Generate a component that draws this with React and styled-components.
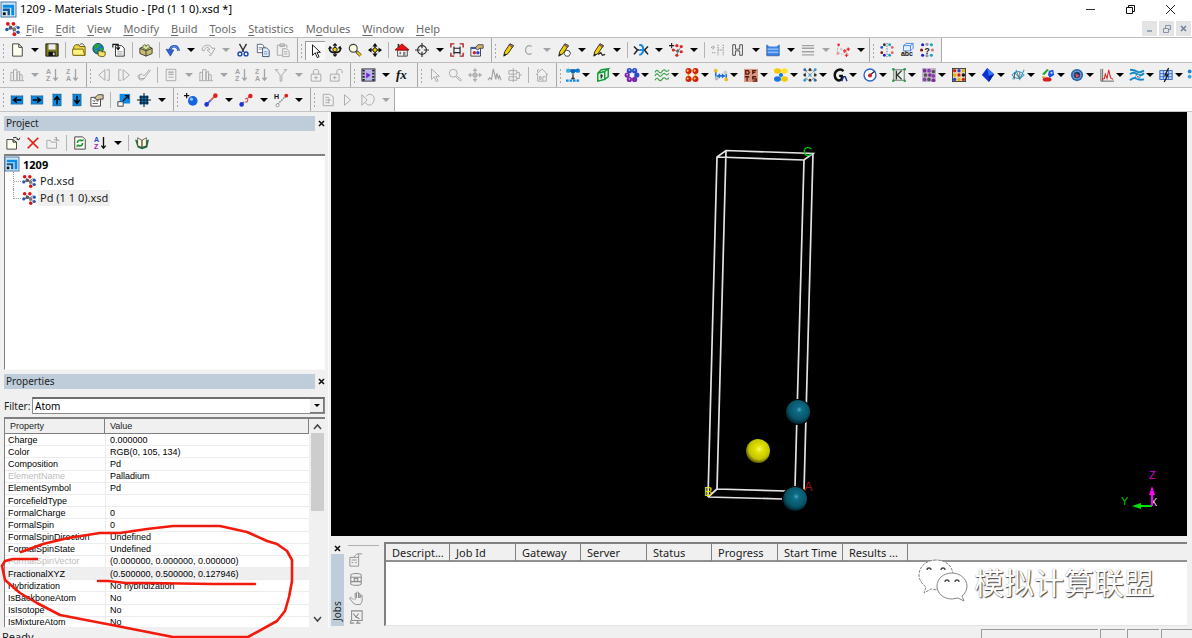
import React from 'react'
import styled, { createGlobalStyle, css } from 'styled-components'

const GlobalStyle = createGlobalStyle`
* {
  box-sizing: border-box;
}
body {
  margin: 0;
  background: #fff;
  font-family: "Noto Sans", "Open Sans", sans-serif;
  font-size: 11px;
  color: #1c1c1c;
}
button {
  font: inherit;
  color: inherit;
  border: 0;
  padding: 0;
  background: transparent;
}
`

const Window = styled.div`
position: relative;
height: 100vh;
display: flex;
flex-direction: column;
overflow: hidden;
background: #fff;
`

/* title and menu */

const TitleBar = styled.header`
display: flex;
align-items: center;
height: 20px;
padding: 0 2px 2px 1px;
flex: none;
`
const Title = styled.h1`
flex: 1;
margin: 0 0 0 4px;
font-size: 11px;
font-weight: 400;
line-height: 18px;
color: #000;
`
const WindowButton = styled.button`
width: 40px;
height: 18px;
display: flex;
align-items: center;
justify-content: center;
&:hover {
  background: #e5e5e5;
}
`
const MenuBar = styled.nav`
display: flex;
align-items: center;
height: 17px;
padding-left: 5px;
flex: none;
`
const MenuList = styled.div`
display: flex;
flex: 1;
gap: 12px;
margin-left: 6px;
`
const MenuItem = styled.button`
line-height: 16px;
color: #6a6a6a;
u {
  text-underline-offset: 2px;
}
`
const MdiButtons = styled.div`
display: flex;
gap: 2px;
padding-right: 1px;
`
const MdiButton = styled.button`
width: 15px;
height: 15px;
display: flex;
align-items: center;
justify-content: center;
background: #e4e4e4;
`

/* tool bars */

const ToolRow = styled.div`
display: flex;
height: ${props => props.$last ? '24px' : '25px'};
flex: none;
border-top: 1px solid #bdbdbd;
overflow: hidden;
`
const Group = styled.div`
display: flex;
align-items: center;
flex: ${props => props.$grow ? '1 1 0' : 'none'};
min-width: 0;
padding-right: ${props => props.$grow ? '0' : props.$tight ? '1px' : '4px'};
background: #f0f0f0;
border-right: ${props => props.$grow ? '0' : '1px solid #a9a9a9'};
`
const Grip = styled.span`
flex: none;
width: 3px;
height: 15px;
margin: 0 2px;
background: radial-gradient(circle, #a8a8a8 1px, transparent 1px) 0 0 / 3px 4px;
`
const ToolButton = styled.button`
width: 20px;
height: 19px;
flex: none;
display: flex;
align-items: center;
justify-content: center;
${props => props.$pressed && css`
background: #f9f9f9;
border-top: 1px solid #9a9a9a;
border-left: 1px solid #9a9a9a;
`}
`
const DropButton = styled.button`
width: 15px;
height: 19px;
flex: none;
display: flex;
align-items: center;
justify-content: center;
&::before {
  content: '';
  border: 4px solid transparent;
  border-top-color: ${props => props.$off ? '#a3a3a3' : '#000'};
  border-bottom: 0;
}
`
const Separator = styled.span`
flex: none;
width: 1px;
height: 16px;
margin: 0 3px;
background: #b4b4b4;
`
const ModuleCell = styled.div`
display: flex;
flex: 1 1 0;
min-width: 0;
${ToolButton} {
  width: 18px;
}
${DropButton} {
  width: 8px;
}
`
const LastModule = styled.div`
width: 5px;
overflow: hidden;
flex: none;
`

/* work area */

const Main = styled.main`
display: flex;
flex: 1;
min-height: 0;
background: #f0f0f0;
border-top: 1px solid #c4c4c4;
`
const Dock = styled.aside`
width: 329px;
flex: none;
display: flex;
flex-direction: column;
padding: 4px 3px 1px 4px;
border-right: 1px solid #fbfbfb;
`
const DockHeader = styled.div`
display: flex;
align-items: center;
height: 15px;
flex: none;
margin-right: -2px;
`
const DockTitle = styled.h2`
flex: 1;
margin: 0;
padding-left: 2px;
background: #bfcddb;
font-size: 10px;
line-height: 15px;
font-weight: 400;
color: #222;
`
const CloseButton = styled.button`
width: 12px;
height: 12px;
flex: none;
display: flex;
align-items: center;
justify-content: center;
`
const DockTools = styled.div`
display: flex;
align-items: center;
height: 23px;
flex: none;
margin-left: -1px;
`
const Tree = styled.ul`
height: 216px;
flex: none;
margin: 0;
padding: 0;
list-style: none;
background: #fff;
border-top: 2px solid #808080;
border-left: 1px solid #808080;
border-bottom: 1px solid #fafafa;
`
const TreeRoot = styled.li`
display: flex;
align-items: center;
gap: 4px;
height: 16px;
font-weight: 700;
color: #000;
`
const TreeItem = styled.li`
display: flex;
align-items: center;
height: 17px;
padding-left: 8px;
`
const TreeBranch = styled.span`
width: 9px;
height: 17px;
border-left: 1px dotted #999;
background: linear-gradient(90deg, #aaa 50%, transparent 50%) 0 9px / 2px 1px repeat-x;
${props => props.$last && css`
height: 10px;
align-self: flex-start;
`}
`
const TreeLabel = styled.span`
margin-left: 2px;
padding: 0 2px;
line-height: 16px;
background: ${props => props.$selected ? '#efefef' : 'transparent'};
`
const PropertiesHeader = styled(DockHeader)`
margin-top: 4px;
`
const FilterRow = styled.div`
display: flex;
align-items: center;
justify-content: space-between;
margin: 8px 0 3px;
font-size: 10px;
`
const SelectBox = styled.div`
position: relative;
display: flex;
width: 293px;
`
const Select = styled.select`
appearance: none;
width: 100%;
height: 17px;
padding: 0 18px 0 2px;
font-family: inherit;
font-size: 10px;
line-height: 14px;
color: #000;
background: #fff;
border: 1px solid #8a8a8a;
border-top: 2px solid #6e6e6e;
border-radius: 0;
`
const SelectArrow = styled.span`
position: absolute;
right: 1px;
top: 2px;
width: 14px;
height: 14px;
display: flex;
align-items: center;
justify-content: center;
pointer-events: none;
background: #f0f0f0;
border-right: 1px solid #777;
border-bottom: 1px solid #777;
&::before {
  content: '';
  border: 3px solid transparent;
  border-top-color: #000;
  border-bottom: 0;
}
`
const PropertyBox = styled.div`
display: flex;
flex: 1;
min-height: 0;
overflow: hidden;
background: #fff;
border-top: 2px solid #808080;
border-left: 1px solid #808080;
`
const PropertyTable = styled.table`
flex: 1;
height: 210px;
table-layout: fixed;
border-collapse: separate;
border-spacing: 0;
font-family: "Liberation Sans", Arial, sans-serif;
font-size: 9px;
line-height: 10px;
th {
  height: 15px;
  padding: 0 5px;
  text-align: left;
  font-weight: 400;
  background: #f0f0f0;
  border-right: 1px solid #808080;
  border-bottom: 1px solid #808080;
}
th:first-child {
  width: 100px;
}
td {
  padding: 0 3px;
  white-space: nowrap;
  border-bottom: 1px solid #ececec;
}
td + td {
  padding-left: 4px;
  border-left: 1px solid #ececec;
}
`
const PropertyRow = styled.tr`
background: ${props => props.$selected ? '#efefef' : '#fff'};
color: #000;
td:first-child {
  color: ${props => props.$readOnly ? '#bdbdbd' : '#000'};
}
`
const ScrollBar = styled.div`
width: 16px;
flex: none;
display: flex;
flex-direction: column;
align-items: center;
justify-content: space-between;
padding: 2px 0;
background: #f0f0f0;
`
const ScrollTrack = styled.div`
flex: 1;
width: 13px;
`
const ScrollThumb = styled.div`
height: 78px;
background: #cdcdcd;
`
const Work = styled.section`
flex: 1;
min-width: 0;
display: flex;
flex-direction: column;
padding: 0 5px 2px 2px;
`
const Viewport = styled.div`
flex: 1;
min-height: 0;
background: #000;
svg {
  display: block;
  width: 100%;
  height: 100%;
}
`
const Jobs = styled.div`
height: 90px;
flex: none;
display: flex;
padding-top: 6px;
`
const JobsSide = styled.div`
width: 13px;
display: flex;
flex-direction: column;
align-items: center;
`
const JobsTab = styled.h2`
flex: 1;
width: 13px;
margin: 0;
padding-top: 5px;
writing-mode: vertical-rl;
transform: rotate(180deg);
background: #bfcddb;
font-size: 10px;
line-height: 13px;
font-weight: 400;
`
const JobsTools = styled.div`
display: flex;
flex-direction: column;
width: 31px;
margin: 3px 5px 0 4px;
padding-top: 4px;
border-top: 1px solid #b0b0b0;
${ToolButton} {
  width: 16px;
}
`
const JobsBox = styled.div`
position: relative;
flex: 1;
min-width: 0;
background: #fff;
border-top: 2px solid #808080;
border-left: 2px solid #808080;
border-bottom: 1px solid #e3e3e3;
`
const JobsTable = styled.table`
width: 100%;
table-layout: fixed;
border-collapse: separate;
border-spacing: 0;
th {
  height: 18px;
  padding: 0 6px;
  text-align: left;
  font-weight: 400;
  line-height: 15px;
  white-space: nowrap;
  overflow: hidden;
  background: #f0f0f0;
  border-right: 1px solid #808080;
  border-bottom: 2px solid #909090;
}
th:last-child {
  border-right: 0;
}
`
const Watermark = styled.div`
position: absolute;
right: 33px;
top: 15px;
display: flex;
align-items: center;
gap: 6px;
font-family: "Noto Sans CJK SC", sans-serif;
font-size: 30px;
line-height: 44px;
color: #fff;
text-shadow: 1px 1px 1px #444, 0 0 1px #888;
`
const StatusBar = styled.footer`
height: 10px;
flex: none;
display: flex;
justify-content: space-between;
gap: 2px;
padding: 1px 0 0 2px;
overflow: hidden;
background: #f0f0f0;
line-height: 15px;
`
const StatusText = styled.span`
flex: 1;
`
const StatusPanel = styled.span`
width: ${props => props.$width}px;
border-top: 1px solid #9b9b9b;
border-left: 1px solid #9b9b9b;
`
const Markup = styled.svg`
position: absolute;
left: 0;
bottom: 0;
pointer-events: none;
`

/* icons, all drawn on a 16 unit grid */

const grey = '#a3a3a3'

const molecule = (
  <>
    <path d="M3 3l5 5 5 4M8 8l5-3M8 8l-6 1M8 8l2 6M2 9l6-1" stroke="#888" fill="none" />
    <circle cx="3" cy="3" r="2" fill="#d11" /><circle cx="9" cy="3" r="2" fill="#d11" />
    <circle cx="6" cy="7" r="2" fill="#555" /><circle cx="10" cy="9" r="2" fill="#777" />
    <circle cx="2" cy="9" r="1.8" fill="#1d54b5" /><circle cx="14" cy="7" r="1.8" fill="#1d54b5" />
    <circle cx="14" cy="12" r="1.8" fill="#1d54b5" /><circle cx="10" cy="14" r="2" fill="#d11" />
  </>
)

const sortLetters = (a, b, colorA, colorB, line) => (
  <>
    <text x="1" y="7" fontSize="8" fontWeight="700" fill={colorA} fontFamily="Liberation Sans">{a}</text>
    <text x="1" y="15" fontSize="8" fontWeight="700" fill={colorB} fontFamily="Liberation Sans">{b}</text>
    <path d="M12 1v13M9.500 11l2.500 3 2.500-3" stroke={line} strokeWidth="1.500" fill="none" />
  </>
)

const pencil = (
  <>
    <path d="M2 15l1-5 6-9 4 2-6 9z" fill="#f0d000" stroke="#222" />
    <path d="M8 2l1-1 4 2-1 2z" fill="#d77a8a" stroke="#222" strokeWidth=".7" />
    <path d="M2 15l1-3 2 1z" fill="#111" />
  </>
)

const paneArrow = d => (
  <>
    <rect x="1" y="3" width="14" height="10" fill="#0a8be8" />
    <path d="M1 3.500h14M1 12.500h14M1.500 3v10M14.500 3v10" stroke="#555" strokeDasharray="1 1" />
    <path d={d} stroke="#000" strokeWidth="1.600" fill="none" />
  </>
)

const paneArrowTall = d => (
  <>
    <rect x="3" y="1" width="10" height="14" fill="#0a8be8" />
    <path d="M3.500 1v14M12.500 1v14M3 1.500h10M3 14.500h10" stroke="#555" strokeDasharray="1 1" />
    <path d={d} stroke="#000" strokeWidth="1.600" fill="none" />
  </>
)

const dots = (list, r = 1.8) => list.map(([x, y, fill]) => (
  <circle key={x + '-' + y} cx={x} cy={y} r={r} fill={fill} />
))

const bars = <path d="M1 14V5h3v9M4 14V2h4v12M8 14V5l3-1v10M11 14V7l3 1v6M0 14.500h16" stroke={grey} fill="none" />

const icons = {
  app: (
    <>
      <rect width="16" height="16" fill="#cfe6f7" stroke="#3a6ea5" />
      <path d="M2 3h12v11h-3V6H2z" fill="#0a8be8" />
      <path d="M2 7h7.500v7H7V9.500H2z" fill="#135a9a" />
      <rect x="2" y="11" width="3" height="3" fill="#111" />
    </>
  ),
  molecule,
  newFile: <path d="M3 1h7l4 4v10H3zM10 1v4h4" fill="#fffff0" stroke="#333" />,
  save: (
    <>
      <path d="M1 1h14v14H1z" fill="#7a7a20" stroke="#111" />
      <rect x="4" y="1.500" width="8" height="6" fill="#eee" /><rect x="4" y="10" width="8" height="5" fill="#111" />
      <rect x="9" y="11" width="2" height="3" fill="#ddd" />
    </>
  ),
  open: (
    <>
      <path d="M2 14V4l2-2h4l1 2h6v10z" fill="#e8d44d" stroke="#5c5000" />
      <path d="M1 14l-.500-7h12l2 7z" fill="#fff27a" stroke="#6d6000" />
      <path d="M9 2c2-2 4-1 5 1" stroke="#333" fill="none" />
    </>
  ),
  globe: (
    <>
      <circle cx="7" cy="6.500" r="6" fill="#1c73d8" stroke="#0a3a66" />
      <path d="M2 4c3-4 6-3 8-2L8 5 5 6l1 4-2 1zM9 6l4-1-1 4-3 1z" fill="#23a33a" />
      <path d="M7 14V9h3l1 1h4v4q-1 2-4 1.500T7 14z" fill="#f3e36a" stroke="#5c5000" />
    </>
  ),
  importFile: (
    <>
      <path d="M4 3h7l3 3v9H4z" fill="#fff" stroke="#222" />
      <path d="M1 5V1.500h6V7M5 5l2 2.500L9 5" stroke="#111" strokeWidth="1.300" fill="none" />
      <path d="M6 10h6M6 12.500h6" stroke="#888" />
    </>
  ),
  box: (
    <>
      <path d="M1 6l7-3 7 3v6l-7 3-7-3z" fill="#c9bd72" stroke="#333" />
      <path d="M1 6l7 3 7-3M8 9v6" stroke="#333" fill="none" />
      <path d="M4 5c1-4 4-4 4-1 1-3 5-2 4 1L8 8z" fill="#dfe3b0" stroke="#4a6a2a" />
    </>
  ),
  undo: (
    <>
      <path d="M4.500 9C5 3 13 1 14.500 9" stroke="#1f4fc0" strokeWidth="3" fill="none" />
      <path d="M4.500 9C5 3 13 1 14.500 9" stroke="#7aa4f5" strokeWidth="1" fill="none" />
      <path d="M0 7l9 1-4 7z" fill="#2f62d0" stroke="#1a3a90" strokeWidth=".6" />
    </>
  ),
  redo: <path d="M1 8C2 1 11 1 12.500 6L16 6l-4 7-5-5 3-.500C9 4 5 4 3.500 9zM9 14h3" fill="none" stroke={grey} />,
  cut: (
    <>
      <path d="M4 1l5 9M12 1L7 10" stroke="#333" strokeWidth="1.600" />
      <circle cx="4.500" cy="12.500" r="2.200" fill="none" stroke="#1946b0" strokeWidth="1.600" />
      <circle cx="11.500" cy="12.500" r="2.200" fill="none" stroke="#1946b0" strokeWidth="1.600" />
    </>
  ),
  copy: (
    <>
      <path d="M1.500 1.500H7l2 2V11H1.500z" fill="#fff" stroke="#4a5568" /><path d="M3 5h4M3 7h4" stroke="#7b8aa0" />
      <path d="M7.500 5.500H12l3 3v7H7.500z" fill="#e8f0ff" stroke="#344768" /><path d="M9 10h4M9 12.500h4" stroke="#6c88b8" />
    </>
  ),
  paste: (
    <>
      <path d="M7 14H1.500V2.500h11V6M4.500 1h5v3h-5z" fill="none" stroke={grey} />
      <path d="M7.500 6.500H12l3 3v6H7.500zM9 10h4M9 12.500h4" fill="none" stroke={grey} />
    </>
  ),
  cursor: <path d="M4 1v12l3-3 2.500 5.500 2-1L9 9.500h4z" fill="#fff" stroke="#000" />,
  rotate: (
    <>
      <path d="M8 1v14M6 3l2-2 2 2M6 13l2 2 2-2" stroke="#111" strokeWidth="1.400" fill="none" />
      <path d="M2 6c-1 4 3 5 6 5s7-1 6-5" stroke="#111" strokeWidth="1.800" fill="none" />
      <path d="M0 7l2-4 3 3zM16 7l-2-4-3 3z" fill="#111" /><circle cx="8" cy="7.500" r="2.500" fill="#f0d000" stroke="#111" />
    </>
  ),
  zoom: (
    <>
      <circle cx="6" cy="6" r="4.500" fill="#fdfde0" stroke="#444" strokeWidth="1.300" />
      <path d="M9.500 9.500l5 5" stroke="#444" strokeWidth="3.500" /><path d="M10.500 10.500l4 4" stroke="#f0d000" strokeWidth="2" />
    </>
  ),
  move: (
    <>
      <path d="M8 1v14M1 8h14" stroke="#111" strokeWidth="1.400" />
      <path d="M5 4l3-4 3 4zM5 12l3 4 3-4zM4 5L0 8l4 3zM12 5l4 3-4 3z" fill="#111" />
      <circle cx="8" cy="8" r="2.500" fill="#f0d000" stroke="#111" />
    </>
  ),
  home: (
    <>
      <path d="M3 8h11v7H3z" fill="#fff" stroke="#333" /><path d="M0 8l8-7 8 7z" fill="#ee1111" stroke="#900" />
      <rect x="9" y="10" width="3" height="5" fill="#888" /><rect x="5" y="10" width="2" height="3" fill="#777" />
      <path d="M3 1h2v4H3z" fill="#333" />
    </>
  ),
  target: (
    <>
      <circle cx="8" cy="8" r="5" fill="none" stroke="#333" strokeWidth="1.400" />
      <path d="M8 0v6M8 10v6M0 8h6M10 8h6" stroke="#333" strokeWidth="1.400" />
    </>
  ),
  fit: (
    <>
      <path d="M1 5V1h4M11 1h4v4M15 11v4h-4M5 15H1v-4" stroke="#b02020" strokeWidth="1.600" fill="none" />
      <path d="M4.500 4v9M11.500 4v9M4 6h8M4 11h8" stroke="#222" strokeWidth="1.300" />
    </>
  ),
  display: (
    <>
      <path d="M1 5h11v10H1z" fill="#fff" stroke="#333" /><path d="M1 5h11v2H1z" fill="#2458c0" />
      <circle cx="5" cy="11" r="2" fill="#d22" /><circle cx="9" cy="11" r="2" fill="#24d" />
      <path d="M6 6l3-4h6v4h-4L9 8z" fill="#d8b66a" stroke="#444" />
    </>
  ),
  pencil,
  partialC: <path d="M11 4C6 1 4 6 4 8s2 7 7 4" fill="none" stroke={grey} strokeWidth="1.300" />,
  pencilRing: <>{pencil}<path d="M10 8l4 1 1.500 3-2 3h-3.500l-2-3z" fill="#fff" stroke="#333" /></>,
  pencilChain: <>{pencil}<path d="M7 13l3-2 2 3 3-1" fill="none" stroke="#222" strokeWidth="1.400" /></>,
  adjust: (
    <>
      <path d="M0 4l4 4-4 5M4 8h2M16 4l-4 4 4 5" stroke="#222" strokeWidth="1.800" fill="none" />
      <path d="M6 2.500c6-2 6 11 0 11M9 8H6" stroke="#1787e0" strokeWidth="2.400" fill="none" />
    </>
  ),
  addAtoms: (
    <>
      <path d="M0 3h6M3 0v6" stroke="#222" strokeWidth="1.300" />
      <path d="M6 8l4 2 4-6M10 10l-1 4" stroke="#777" fill="none" />
      {dots([[9, 3, '#d22'], [14, 4, '#d22'], [5, 8, '#d22'], [10, 9, '#666'], [14, 10, '#d22'], [9, 14, '#d22']], 1.8)}
    </>
  ),
  dottedH: <path d="M0 5h5M2.500 3v5M8 2v12M14 2v12M8 8h6M1 11h4" stroke={grey} strokeDasharray="1.500 1.200" strokeWidth="1.500" fill="none" />,
  letterH: <path d="M2 2h3v5h5V2h3v12h-3V9H5v5H2z" fill="#fff" stroke="#333" />,
  layers: (
    <>
      <path d="M1 2l3 2h8l3-2v12H1z" fill="#3a86e8" /><path d="M1 7h14M1 10.500h14" stroke="#cfe2ff" />
      <path d="M1 2v12.500h14V2" stroke="#1d4da0" fill="none" />
    </>
  ),
  lines: <path d="M1 3h14M1 6h14M1 10h14M1 13.500h14" stroke={grey} strokeWidth="1.500" />,
  hbond: (
    <>
      <path d="M3 3L1 9l5 4 5-3 3 3" stroke={grey} strokeDasharray="2 1" fill="none" />
      {dots([[3, 2, '#e22'], [2, 12, '#e88'], [6, 7, '#ccc']], 1.5)}
      <path d="M8 9h4M10 7v4M10 14h4M12 12v4M12 7h4M14 5v4" stroke="#e22" strokeWidth="1.300" />
    </>
  ),
  cluster: (
    <>
      {dots([[5, 2, '#333'], [11, 2, '#17a2c8'], [2, 5, '#1d54d5'], [14, 5, '#d66'], [2, 11, '#811'], [14, 11, '#d66'], [5, 14, '#1d1de0'], [11, 14, '#17a2c8']], 1.6)}
      <path d="M8 0v16" stroke="#555" strokeDasharray="1.500 1.500" />
    </>
  ),
  abc: (
    <>
      <path d="M4 3h8v6H4zM4 3l3-2.500h8V6l-3 3M12 3l3-2.500" fill="#e6f0ff" stroke="#3a80e0" />
      <text x="1" y="15" fontSize="8" fontWeight="700" fontFamily="Liberation Sans" fill="#111">abc</text>
    </>
  ),
  clusterHelp: (
    <>
      {dots([[3, 2, '#1d1de0'], [8, 1.5, '#999'], [13, 2, '#17a2c8'], [1.8, 8, '#811'], [14.2, 8, '#d77'], [3, 14, '#1d1de0'], [8, 14.5, '#999'], [13, 14, '#17a2c8']])}
      <text x="5" y="12" fontSize="10" fontWeight="700" fontFamily="Liberation Sans" fill="#222">?</text>
    </>
  ),
  bars,
  sortAZ: sortLetters('A', 'Z', grey, grey, grey),
  sortZA: sortLetters('Z', 'A', grey, grey, grey),
  sortColor: sortLetters('A', 'Z', '#2540e0', '#a0209a', '#111'),
  prev: <path d="M9 2L2 8l7 6zM11 2h3v12h-3" fill="none" stroke={grey} />,
  next: <path d="M7 2l7 6-7 6zM5 2H2v12h3" fill="none" stroke={grey} />,
  edit: <path d="M1 9c2-3 5-2 7 0l6-7 1 1-6 8c-2 4-7 4-8-2zM4 12h5M3 8v5" fill="none" stroke={grey} />,
  sheet: <path d="M2.500 1.500h11v13h-11zM5 4.500h6M5 7.500h6M5 10.500h6M5 5.500h6" fill="none" stroke={grey} />,
  funnel: <path d="M2 2l5 6v7h2V8l5-6M1 2h4M11 2h4" fill="none" stroke={grey} />,
  lock: <path d="M2.500 7h11v8h-11zM5 7V3c1-2 5-2 6 0v4M8 9v4M6 11h4" fill="none" stroke={grey} />,
  unlock: <path d="M1.500 7h10v8h-10zM9 7V3c1-2 5-2 6 0v3M6.500 9v4M4.500 11h4" fill="none" stroke={grey} />,
  film: (
    <>
      <rect x="1" y="1" width="15" height="14" fill="#b9b9e8" stroke="#333" />
      <path d="M3 2v13M14 2v13" stroke="#222" strokeWidth="2.500" strokeDasharray="2 1.500" />
      <path d="M6 5l5 3-5 4z" fill="#7a1fe0" />
    </>
  ),
  fx: (
    <text x="0" y="13" fontSize="15" fontStyle="italic" fontWeight="700" fontFamily="Liberation Serif" fill="#111">fx</text>
  ),
  cursorOff: <path d="M4 1v12l3-3 2.500 5.500 2-1L9 9.500h4z" fill="none" stroke={grey} />,
  zoomOff: <><circle cx="6" cy="6" r="4.500" fill="none" stroke={grey} /><path d="M9 10l5 5 1.500-1.500-5-4" fill="none" stroke={grey} /></>,
  moveOff: <path d="M8 1v14M1 8h14M6 3l2-2.500L10 3zM6 13l2 2.500 2-2.500zM3 6L.500 8 3 10zM13 6l2.500 2-2.500 2zM6 6h4v4H6z" fill="none" stroke={grey} />,
  peaks: <path d="M0 14l2-3 2 2 2-12 3 12 1-7 2 6 1-3 2 5" fill="none" stroke={grey} strokeWidth="1.300" />,
  flow: <path d="M1 3h9v4H1zM1 10h9v4H1zM6 0v16M10 5h3v7h-3M13 8h3" fill="none" stroke={grey} />,
  homeOff: <path d="M1 8l7-7 7 7M3 7v8h10V7M9 15v-5h3M5 10h2v3H5zM3 5V2h2" fill="none" stroke={grey} />,
  moduleT: (
    <>
      <path d="M2 3h12" stroke="#0a6ab8" strokeWidth="3" />
      {dots([[2.5, 3, '#38a8f0'], [13.5, 3, '#0a7ad8'], [8, 4, '#0a6ab8']], 2.5)}
      <path d="M0 14.500h16" stroke="#118ae8" strokeWidth="2.500" strokeDasharray="3 1" /><path d="M8 7v6M6 12h4" stroke="#333" strokeWidth="1.500" />
    </>
  ),
  moduleCube: (
    <>
      <path d="M2 6l8-2v9l-8 2zM2 6l4-4 8-1-4 3M14 1v9l-4 3" fill="#d8f4d8" stroke="#139a3a" strokeWidth="1.600" />
      <path d="M6 7v5M5 9h3" stroke="#222" strokeWidth="1.300" />
    </>
  ),
  moduleRing: (
    <>
      {dots([[5, 3, '#2a49c8'], [11, 3, '#2a49c8'], [2.5, 8, '#7a2aa8'], [13.5, 8, '#2a49c8'], [5, 13, '#7a2aa8'], [11, 13, '#7a2aa8']], 3)}
      {dots([[5, 2.5, '#9ab0ff'], [11, 2.5, '#9ab0ff'], [2.5, 7.5, '#d0a0f0'], [5, 12.5, '#d0a0f0']], 1)}
    </>
  ),
  moduleWaves: <path d="M0 5q2-4 4-1t4 0 4-1 4-1M0 9q2-4 4-1t4 0 4-1 4-1M0 14q2-4 4-1t4 0 4-1 4-1" fill="none" stroke="#3fa050" strokeWidth="1.300" />,
  moduleFour: (
    <>
      <path d="M4 3h8M4 13h8M4 4v8M12 4v8" stroke="#f0a000" strokeWidth="2" />
      {dots([[4, 3.5, '#d02010'], [12, 3.5, '#d02010'], [4, 12.5, '#d02010'], [12, 12.5, '#d02010']], 3.4)}
      {dots([[3, 3, '#ffd860'], [11, 3, '#ffd860'], [3, 12, '#ffd860'], [11, 12, '#ffd860']], 1.2)}
    </>
  ),
  moduleLink: (
    <>
      <path d="M2 3v7M14 6v7M4 9h8" stroke="#1d6fd8" strokeWidth="1.800" />
      {dots([[2, 3, '#e8c020'], [3, 12, '#bbb'], [13, 5, '#ccc'], [14, 13, '#e8c020']], 2.2)}
      <path d="M3 9l4-3v6zM13 9L9 6v6z" fill="#1d6fd8" />
    </>
  ),
  moduleGrid: (
    <>
      <rect x="0" y="1" width="16" height="15" fill="#d99a84" />
      <path d="M2 3h3l1 2-1 2H2zM10 7V3h4M10 5h3M1 10h5M3.500 10v5M14 10h-4v2.500h4V15h-4" fill="none" stroke="#5c1a10" strokeWidth="1.500" />
    </>
  ),
  modulePetals: (
    <>
      <ellipse cx="4" cy="3.500" rx="4" ry="3.200" fill="#f5c800" /><ellipse cx="4" cy="12.500" rx="4" ry="3.200" fill="#1677e0" />
      <ellipse cx="12" cy="3.500" rx="3.800" ry="3.200" fill="#ffdf30" /><ellipse cx="12" cy="12.500" rx="3.800" ry="3.200" fill="#f5c800" />
      <circle cx="8" cy="8" r="2.400" fill="#1677e0" />
    </>
  ),
  moduleLattice: (
    <>
      <path d="M3 3h10v10H3zM3 3l10 10M13 3L3 13" fill="none" stroke="#888" strokeDasharray="2 1" />
      {dots([[2, 2, '#2a6aa8'], [8, 2, '#333'], [14, 2, '#2a9ac8'], [2, 8, '#333'], [8, 8, '#4ac'], [14, 8, '#333'], [2, 14, '#2a9ac8'], [8, 14, '#333'], [14, 14, '#2a6aa8']], 1.6)}
    </>
  ),
  moduleG: (
    <>
      <path d="M12 3.500C8-.500 2 3 2 8s4 8 8 5V9H7" fill="none" stroke="#111" strokeWidth="2.800" />
      <path d="M10 15l2-5h2l2 5" fill="none" stroke="#1d2f90" strokeWidth="1.600" />
    </>
  ),
  moduleGauge: (
    <>
      <circle cx="8" cy="8" r="6.800" fill="#fff" stroke="#2a64c8" strokeWidth="1.600" />
      <path d="M8 8l5-4" stroke="#222" strokeWidth="1.400" /><circle cx="8" cy="8.500" r="2.300" fill="#d02030" />
    </>
  ),
  moduleK: (
    <>
      <path d="M2 2h12v12H2z" fill="#e8f4e8" stroke="#666" /><path d="M5 3v10M11 3L6 8l5 5" stroke="#333" strokeWidth="1.600" fill="none" />
      {dots([[1.5, 1.5, '#1fa040'], [14.5, 1.5, '#1fa040'], [1.5, 14.5, '#1fa040'], [14.5, 14.5, '#1fa040']], 1.5)}
    </>
  ),
  moduleViolet: (
    <>
      <rect width="16" height="16" fill="#c3b6c8" />
      {dots([[3, 3, '#7a2a9a'], [8, 3, '#8a3ab0'], [13, 4, '#555'], [4, 8, '#555'], [9, 8, '#7a2a9a'], [13, 9, '#8a3ab0'], [3, 13, '#8a3ab0'], [8, 13, '#555'], [13, 14, '#7a2a9a']], 2.1)}
    </>
  ),
  moduleMosaic: (
    <>
      <rect x=".5" y=".5" width="15" height="15" fill="#e6d5b0" stroke="#333" />
      {dots([[3, 3, '#d02020'], [8, 3, '#2040c0'], [13, 3, '#e0b000'], [3, 8, '#e0b000'], [8, 8, '#d02020'], [13, 8, '#111'], [3, 13, '#2040c0'], [8, 13, '#e0b000'], [13, 13, '#d02020']], 1.9)}
    </>
  ),
  moduleGem: <><path d="M7 0l8 7-6 9-8-8z" fill="#1030d8" /><path d="M7 0l2 9 6-2z" fill="#2f78ff" /><path d="M9 9v7l6-9z" fill="#0a1fa0" /></>,
  moduleN: (
    <>
      <path d="M2 13L6 3l4 10 5-11M1 8q7-8 14 0q-7 8-14 0" fill="none" stroke="#2f9ac8" strokeWidth="1.200" />
      <path d="M4 13V5l6 7V4" fill="none" stroke="#666" />
    </>
  ),
  moduleDrops: (
    <>
      <path d="M1 7l6-6 2 1-5 6z" fill="#2da030" /><path d="M9 3l5-1 1 6-5 3-2-3z" fill="#1d54d8" />
      <ellipse cx="7" cy="13" rx="5" ry="2.500" fill="#d02020" /><circle cx="12" cy="5.500" r="1.300" fill="#bcd4ff" /><ellipse cx="3" cy="10.500" rx="2" ry="1" fill="#e0a020" />
    </>
  ),
  moduleBall: (
    <>
      <circle cx="8" cy="8" r="7" fill="#2a6aa8" /><circle cx="8" cy="8" r="4.500" fill="#1a3c78" stroke="#8ab8e8" />
      <path d="M6 6l5 3-4 2z" fill="#f0504a" />
    </>
  ),
  modulePlot: <><path d="M1 1v14h15M3 1v14" stroke="#555" fill="none" /><path d="M2 13l3-1 1-5 2 5 2-10 2 9 3 2" stroke="#e02020" strokeWidth="1.200" fill="none" /></>,
  moduleStreams: (
    <>
      <path d="M0 2q5 0 8 2t8-1M0 7q4-3 8 0t8-1M0 14q4-4 7-2t9 1" fill="none" stroke="#1488c8" strokeWidth="2.200" />
      <circle cx="9" cy="10" r="2.500" fill="#fff" stroke="#1488c8" /><circle cx="9" cy="10" r="1" fill="#c22" />
    </>
  ),
  moduleTable: (
    <>
      <rect x="1" y="3" width="14" height="10" fill="#cfe0ff" stroke="#1d54b8" /><path d="M1 6.500h14M1 10h14M5 3v10M11 3v10" stroke="#2a64c8" />
      <path d="M11 0L7 8h3l-4 8" stroke="#111" strokeWidth="1.500" fill="none" />
    </>
  ),
  moduleDots: dots([[3, 5, '#1488c8'], [3, 11, '#38a8f0'], [8, 3, '#1488c8'], [8, 8, '#d22'], [8, 13, '#1488c8']], 2.2),
  paneLeft: paneArrow('M13 8H4M8 5L4 8l4 3'),
  paneRight: paneArrow('M3 8h9M8 5l4 3-4 3'),
  paneUp: paneArrowTall('M8 13V4M5 8l3-4 3 4'),
  paneDown: paneArrowTall('M8 3v9M5 8l3 4 3-4'),
  properties: (
    <>
      <path d="M1 5h11v10H1z" fill="#fff" stroke="#333" /><path d="M3 8l2 2 1-2M3 12h6M7 9h3" stroke="#555" fill="none" />
      <path d="M5 6l4-4h6v5h-4L9 8z" fill="#d8c8a0" stroke="#333" />
    </>
  ),
  resize: (
    <>
      <rect x="3" y="1" width="12" height="11" fill="#0a8be8" /><rect x="1" y="10" width="6" height="5" fill="#fff" stroke="#333" />
      <path d="M7 9l6-6M9 3h4v4" stroke="#111" strokeWidth="1.600" fill="none" />
    </>
  ),
  centre: (
    <>
      <path d="M3 3h10v10H3z" fill="#0a8be8" />
      <path d="M8 0v16M0 8h16M3 4.500h10M3 11.500h10M4.500 3v10M11.500 3v10" stroke="#111" strokeWidth="1.200" />
    </>
  ),
  atom: <><circle cx="10" cy="9" r="5.500" fill="#1565e0" /><circle cx="8.500" cy="7" r="1.800" fill="#8cc0ff" /><path d="M0 3h6M3 0v6" stroke="#111" strokeWidth="1.400" /></>,
  bond: <><path d="M3 13l5-5" stroke="#5a6ae0" strokeWidth="2.200" /><path d="M8 8l5-5" stroke="#e06a5a" strokeWidth="2.200" /><circle cx="3" cy="13" r="2.600" fill="#2030e0" /><circle cx="13" cy="3" r="2.600" fill="#e02020" /></>,
  bondPart: <><path d="M3 13l3-3M10 6l3-3" stroke="#888" strokeWidth="1.600" fill="none" /><path d="M7 7q3-2 3 1t-3 2" stroke="#d44" strokeWidth="1.300" fill="none" /><circle cx="3" cy="13" r="2.600" fill="#2030e0" /><circle cx="13" cy="3.500" r="2.600" fill="#e02020" /></>,
  bondH: (
    <>
      <text x="0" y="7" fontSize="8" fontWeight="700" fontFamily="Liberation Sans" fill="#111">H</text>
      <path d="M4 13l9-9" stroke="#888" strokeWidth="1.500" strokeDasharray="2 1" /><circle cx="14" cy="3" r="2.200" fill="#e02020" /><circle cx="4" cy="14" r="1.800" fill="#fff" stroke="#888" />
    </>
  ),
  script: <path d="M2.500 1.500H10l4 3v10H2.500zM5 5h4M5 8h6M5 11h4M9 6v6" fill="none" stroke={grey} />,
  play: <path d="M4 2l7 6-7 6z" fill="none" stroke={grey} />,
  playLoop: <path d="M1 2l6 6-6 6zM6 4c3-5 10-2 9 4s-7 8-10 3" fill="none" stroke={grey} />,
  newItem: <><path d="M1 4h7l4 3v8H1z" fill="#fffff0" stroke="#333" /><path d="M8 4v3h4M8 2q4-2 6 2M12 3.500l2.500 1L16 2" fill="none" stroke="#111" /></>,
  remove: <path d="M2 2l12 12M14 2L2 14" stroke="#e02010" strokeWidth="2" />,
  newFolder: <path d="M1 14V5h4l1 2h6v7zM12 1v5M9 4l6 1M10 1l5 5" fill="none" stroke={grey} />,
  refresh: (
    <>
      <path d="M2 1h9l3 3v11H2z" fill="#fff" stroke="#333" />
      <path d="M5 8c0-4 5-4 5-2M11 8c0 4-5 4-5 2" stroke="#1f9a28" strokeWidth="1.800" fill="none" /><path d="M8 6h4V3zM8 10H4v3z" fill="#1f9a28" />
    </>
  ),
  book: (
    <>
      <path d="M0 4l3 9 5 2 6-2 2-9-3 1-5 3-5-3z" fill="#17704a" />
      <path d="M3 2l5 3v8l-5-2zM13 2L8 5v8l5-2z" fill="#fffbd8" stroke="#333" strokeWidth=".8" />
    </>
  ),
  jobView: <path d="M1 5h10v10H1zM3 8h6M3 11h2M7 11h2M5 5l4-4h6M11 1v4" fill="none" stroke="#8a8a8a" />,
  jobStore: <path d="M2 4c0-3 12-3 12 0v9c0 3-12 3-12 0zM2 6h12M2 11h12M6 7.500h4v3H6z" fill="none" stroke="#8a8a8a" strokeWidth="1.200" />,
  jobHand: <path d="M5 10L2 7 .500 8 5 14l3 1.500h5l2-4V5l-1.500-.500L12.500 8V3L11 2.500V8 2L9.500 1 8.500 2v6-5L7 2.500V10" fill="none" stroke="#8a8a8a" />,
  jobRemote: <path d="M3 1h12v11H3zM5 4l3 4 3-4M8 8l4 2M1 15h5M8 15h5M2 12v3M10 12v3" fill="none" stroke="#8a8a8a" strokeWidth="1.200" />,
}

const Icon = ({ name, size = 14 }) => (
  <svg width={size} height={size} viewBox="0 0 16 16" overflow="visible" aria-hidden="true">{icons[name]}</svg>
)

/* '|' is a separator, 'v' a drop-down arrow and '-' a disabled one */
const Tools = ({ items, pressed }) => items.map((item, i) => {
  if (item === '|') return <Separator key={i} />
  if (item === 'v' || item === '-') return <DropButton key={i} $off={item === '-'} aria-label="More" />
  return (
    <ToolButton key={i} aria-label={item} $pressed={item === pressed}>
      <Icon name={item} />
    </ToolButton>
  )
})

const menus = [
  ['', 'F', 'ile'], ['', 'E', 'dit'], ['', 'V', 'iew'], ['', 'M', 'odify'], ['', 'B', 'uild'],
  ['', 'T', 'ools'], ['', 'S', 'tatistics'], ['M', 'o', 'dules'], ['', 'W', 'indow'], ['', 'H', 'elp'],
]

const rowOne = [
  { items: ['newFile', 'v', 'save', '|', 'open', 'globe', 'importFile', '|', 'box', '|', 'undo', 'v', 'redo', '-', 'cut', 'copy', 'paste'] },
  { items: ['cursor', 'rotate', 'zoom', 'move', '|', 'home', 'target', 'v', 'fit', 'display'], pressed: 'cursor' },
  { items: ['pencil', 'partialC', '-', 'pencilRing', 'v', 'pencilChain', 'v', '|', 'adjust', 'v', 'addAtoms', 'v', '|', 'dottedH', 'letterH', 'v', 'layers', 'v', 'lines', '-', 'hbond', 'v'], tight: true },
  { items: ['cluster', 'abc', 'clusterHelp'] },
]

const rowTwo = [
  { items: ['bars', '-', 'sortAZ', 'sortZA'] },
  { items: ['prev', 'next', 'edit', '|', 'sheet', '-', 'bars', '-', 'sortAZ', 'sortZA', 'funnel', '-', 'lock', 'unlock'] },
  { items: ['film', 'v', 'fx'] },
  { items: ['cursorOff', 'zoomOff', 'moveOff', 'peaks', 'flow', '|', 'homeOff'] },
]

const modules = [
  'moduleT', 'moduleCube', 'moduleRing', 'moduleWaves', 'moduleFour', 'moduleLink', 'moduleGrid',
  'modulePetals', 'moduleLattice', 'moduleG', 'moduleGauge', 'moduleK', 'moduleViolet', 'moduleMosaic',
  'moduleGem', 'moduleN', 'moduleDrops', 'moduleBall', 'modulePlot', 'moduleStreams', 'moduleTable',
]

const rowThree = [
  { items: ['paneLeft', 'paneRight', 'paneUp', 'paneDown', 'properties', '|', 'resize', 'centre', 'v'] },
  { items: ['atom', 'bond', 'v', 'bondPart', 'v', 'bondH', 'v'] },
  { items: ['script', 'play', 'playLoop', '-'], tight: true },
]

const properties = [
  ['Charge', '0.000000'],
  ['Color', 'RGB(0, 105, 134)'],
  ['Composition', 'Pd'],
  ['ElementName', 'Palladium', true],
  ['ElementSymbol', 'Pd'],
  ['ForcefieldType', ''],
  ['FormalCharge', '0'],
  ['FormalSpin', '0'],
  ['FormalSpinDirection', 'Undefined'],
  ['FormalSpinState', 'Undefined'],
  ['FormalSpinVector', '(0.000000, 0.000000, 0.000000)', true],
  ['FractionalXYZ', '(0.500000, 0.500000, 0.127946)'],
  ['Hybridization', 'No hybridization'],
  ['IsBackboneAtom', 'No'],
  ['IsIsotope', 'No'],
  ['IsMixtureAtom', 'No'],
]

const jobColumns = [
  ['Descript...', 64], ['Job Id', 66], ['Gateway', 65], ['Server', 66],
  ['Status', 65], ['Progress', 66], ['Start Time', 65], ['Results ...', 65],
]

const Groups = ({ groups }) => groups.map((group, i) => (
  <Group key={i} $tight={group.tight}>
    <Grip />
    <Tools items={group.items} pressed={group.pressed} />
  </Group>
))

const SmallCross = () => (
  <svg width="7" height="7" viewBox="0 0 7 7" aria-hidden="true">
    <path d="M1 1l5 5M6 1L1 6" stroke="#111" strokeWidth="1.600" />
  </svg>
)

const Scene = () => (
  <svg viewBox="0 0 856 424" role="img" aria-label="Pd (1 1 0) cell">
    <defs>
      <radialGradient id="palladium" cx=".55" cy=".4" r=".6">
        <stop offset="0" stopColor="#4fa6bd" />
        <stop offset=".2" stopColor="#0e6d87" />
        <stop offset=".7" stopColor="#085468" />
        <stop offset="1" stopColor="#02222c" />
      </radialGradient>
      <radialGradient id="picked" cx=".55" cy=".42" r=".6">
        <stop offset="0" stopColor="#f7f77a" />
        <stop offset=".25" stopColor="#e3e300" />
        <stop offset=".7" stopColor="#c4c400" />
        <stop offset="1" stopColor="#4a4a00" />
      </radialGradient>
    </defs>
    <g fill="none" stroke="#e2e2e2" strokeWidth="1.700">
      <path d="M377 385L386 45l9-6.500 87 3-9 6.500-87-3M395 39l-9 338-9 8M386 377l69 2M377 385l74 2" />
      <path d="M473 48l-9 327M482 41l-9 338" />
    </g>
    <g fontFamily="Liberation Sans, sans-serif" fontSize="13">
      <text x="472" y="44" fill="#00c800">C</text>
      <text x="373" y="384" fill="#e6e600">B</text>
      <text x="473" y="379" fill="#a01414">A</text>
    </g>
    <circle cx="467" cy="300" r="13" /><circle cx="464" cy="387" r="13" />
    <circle cx="467" cy="300" r="12" fill="url(#palladium)" />
    <circle cx="464" cy="387" r="12" fill="url(#palladium)" />
    <circle cx="427" cy="339" r="12" fill="url(#picked)" />
    <g fontFamily="Liberation Sans, sans-serif" fontSize="11">
      <text x="818" y="367" fill="#d400d4">Z</text>
      <text x="790" y="393" fill="#00c800">Y</text>
      <text x="819" y="394" fill="#ddd">X</text>
    </g>
    <path d="M821 394h-12" stroke="#00e000" strokeWidth="2" />
    <path d="M801 394l9-3v6z" fill="#00e000" />
    <path d="M821 394v-12" stroke="#f0f" strokeWidth="2" />
    <path d="M821 374l3 9h-6z" fill="#f0f" />
  </svg>
)

const WeChatLogo = () => (
  <svg width="50" height="44" viewBox="0 0 50 44" aria-hidden="true">
    <g fill="#fff" stroke="#888" strokeWidth="1">
      <path d="M18 1C8 1 1 8 1 16c0 5 3 9 7 12l-2 6 7-4 6 1c1-10 7-15 16-16C34 6 27 1 18 1z" strokeDasharray="3 1" />
      <path d="M34 14c-9 0-15 6-15 13s6 13 15 13l6-1 6 3-2-5c3-2 5-6 5-10 0-7-7-13-15-13z" />
    </g>
    <path d="M9 11a2 2 0 0 1 4 0M23 11a2 2 0 0 1 4 0M27 23a2 2 0 0 1 4 0M37 23a2 2 0 0 1 4 0" fill="none" stroke="#444" strokeWidth="1.300" />
  </svg>
)

const App = () => (
  <>
    <GlobalStyle />
    <Window>
      <TitleBar>
        <Icon name="app" size={15} />
        <Title>1209 - Materials Studio - [Pd (1 1 0).xsd *]</Title>
        <WindowButton aria-label="Minimize">
          <svg width="9" height="9"><path d="M0 4.500h9" stroke="#333" /></svg>
        </WindowButton>
        <WindowButton aria-label="Restore">
          <svg width="9" height="9"><path d="M.500 2.500h6v6h-6zM2.500 2.500v-2h6v6h-2" fill="none" stroke="#111" /></svg>
        </WindowButton>
        <WindowButton aria-label="Close">
          <svg width="9" height="9"><path d="M0 0l9 9M9 0L0 9" stroke="#222" /></svg>
        </WindowButton>
      </TitleBar>
      <MenuBar>
        <Icon name="molecule" size={15} />
        <MenuList>
          {menus.map(([before, key, after]) => (
            <MenuItem key={key + after}>{before}<u>{key}</u>{after}</MenuItem>
          ))}
        </MenuList>
        <MdiButtons>
          <MdiButton aria-label="Minimize document">
            <svg width="7" height="7"><path d="M1 6h5" stroke="#8593a8" strokeWidth="1.500" /></svg>
          </MdiButton>
          <MdiButton aria-label="Restore document">
            <svg width="8" height="8"><path d="M.500 3.500h5v4h-5zM2.500 3V.500h5v4H6" fill="none" stroke="#8593a8" /></svg>
          </MdiButton>
          <MdiButton aria-label="Close document">
            <svg width="7" height="7"><path d="M1 1l5 5M6 1L1 6" stroke="#71809a" strokeWidth="1.600" /></svg>
          </MdiButton>
        </MdiButtons>
      </MenuBar>

      <ToolRow><Groups groups={rowOne} /></ToolRow>
      <ToolRow>
        <Groups groups={rowTwo} />
        <Group $grow>
          <Grip />
          {modules.map(name => (
            <ModuleCell key={name}>
              <ToolButton aria-label={name}><Icon name={name} /></ToolButton>
              <DropButton aria-label={name + ' menu'} />
            </ModuleCell>
          ))}
          <LastModule><Icon name="moduleDots" /></LastModule>
        </Group>
      </ToolRow>
      <ToolRow $last><Groups groups={rowThree} /></ToolRow>

      <Main>
        <Dock>
          <DockHeader>
            <DockTitle>Project</DockTitle>
            <CloseButton aria-label="Close Project"><SmallCross /></CloseButton>
          </DockHeader>
          <DockTools>
            <Tools items={['newItem', 'remove', 'newFolder', '|', 'refresh', 'sortColor', 'v', '|', 'book']} />
          </DockTools>
          <Tree>
            <TreeRoot><Icon name="app" size={14} />1209</TreeRoot>
            <TreeItem>
              <TreeBranch />
              <Icon name="molecule" />
              <TreeLabel>Pd.xsd</TreeLabel>
            </TreeItem>
            <TreeItem>
              <TreeBranch $last />
              <Icon name="molecule" />
              <TreeLabel $selected>Pd (1 1 0).xsd</TreeLabel>
            </TreeItem>
          </Tree>

          <PropertiesHeader>
            <DockTitle>Properties</DockTitle>
            <CloseButton aria-label="Close Properties"><SmallCross /></CloseButton>
          </PropertiesHeader>
          <FilterRow>
            <label htmlFor="filter">Filter:</label>
            <SelectBox>
              <Select id="filter" defaultValue="Atom"><option>Atom</option></Select>
              <SelectArrow />
            </SelectBox>
          </FilterRow>
          <PropertyBox>
            <PropertyTable>
              <thead>
                <tr><th>Property</th><th>Value</th></tr>
              </thead>
              <tbody>
                {properties.map(([name, value, readOnly]) => (
                  <PropertyRow key={name} $readOnly={readOnly} $selected={name === 'FractionalXYZ'}>
                    <td>{name}</td>
                    <td>{value}</td>
                  </PropertyRow>
                ))}
              </tbody>
            </PropertyTable>
            <ScrollBar>
              <svg width="9" height="12"><path d="M1 8l3.500-4L8 8" fill="none" stroke="#444" strokeWidth="1.500" /></svg>
              <ScrollTrack><ScrollThumb /></ScrollTrack>
              <svg width="9" height="12"><path d="M1 4l3.500 4L8 4" fill="none" stroke="#444" strokeWidth="1.500" /></svg>
            </ScrollBar>
          </PropertyBox>
        </Dock>

        <Work>
          <Viewport><Scene /></Viewport>
          <Jobs>
            <JobsSide>
              <CloseButton aria-label="Close Jobs"><SmallCross /></CloseButton>
              <JobsTab>Jobs</JobsTab>
            </JobsSide>
            <JobsTools>
              <Tools items={['jobView', 'jobStore', 'jobHand', 'jobRemote']} />
            </JobsTools>
            <JobsBox>
              <JobsTable>
                <colgroup>
                  {jobColumns.map(([name, width]) => <col key={name} width={width} />)}
                  <col />
                </colgroup>
                <thead>
                  <tr>
                    {jobColumns.map(([name]) => <th key={name}>{name}</th>)}
                    <th aria-label="Empty" />
                  </tr>
                </thead>
              </JobsTable>
              <Watermark><WeChatLogo />模拟计算联盟</Watermark>
            </JobsBox>
          </Jobs>
        </Work>
      </Main>

      <StatusBar>
        <StatusText>Ready</StatusText>
        <StatusPanel $width={117} />
        <StatusPanel $width={25} />
        <StatusPanel $width={32} />
        <StatusPanel $width={31} />
      </StatusBar>

      <Markup width="300" height="120" viewBox="0 518 300 120" aria-hidden="true">
        <g fill="none" stroke="#f21a0c" strokeWidth="2.600" strokeLinecap="round" strokeLinejoin="round">
          <path d="M21 552l22-8 25-6 32-5h20l27-4 26-3h47l27 6 20 9 10 3 10 7 5 9v21l-3 16-4 14-8 10-29 16h-75l-56-11-57-11-23-12-17-10-15-13-3-14 3-5 8-2h24" />
          <path d="M98 581h10l18 2h22l65 1h42" />
        </g>
      </Markup>
    </Window>
  </>
)

export default App
